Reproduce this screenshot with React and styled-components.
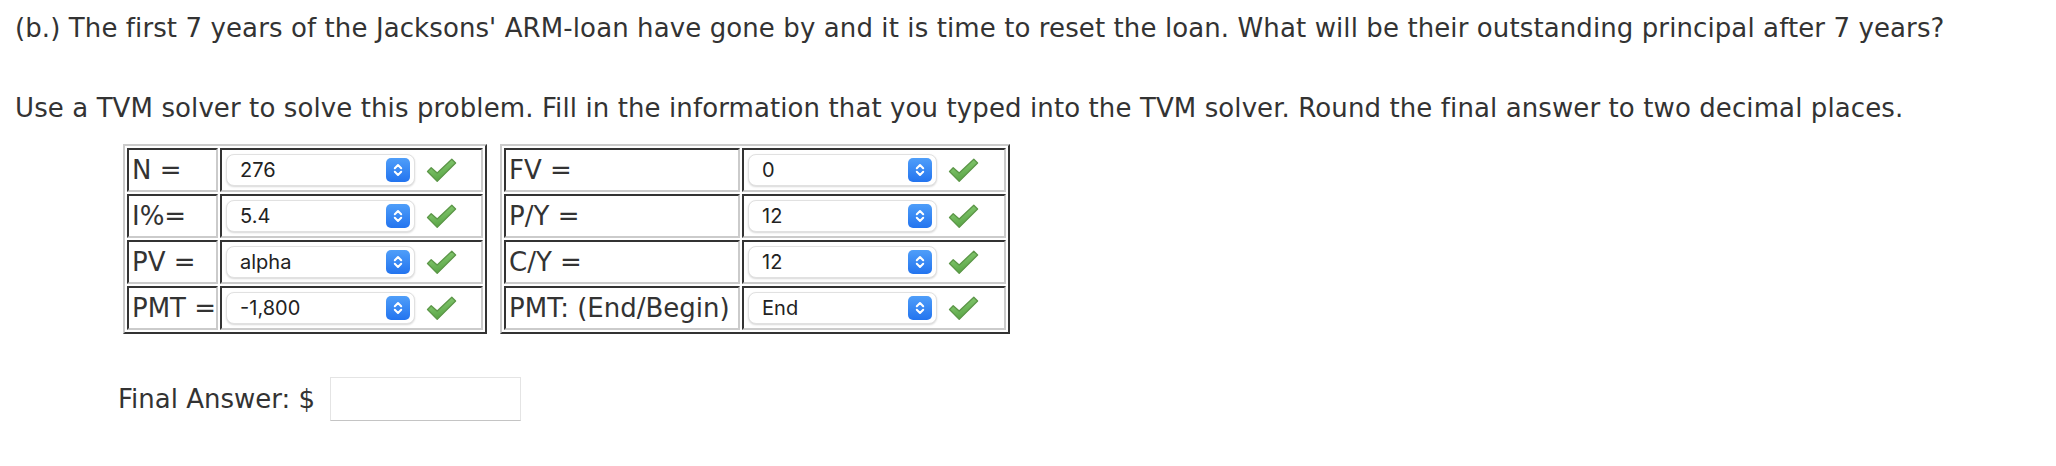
import styled, { createGlobalStyle } from "styled-components";

const GlobalStyle = createGlobalStyle`
  body {
    margin: 0;
    background: #fff;
    color: #333;
    font-family: "DejaVu Sans", Verdana, sans-serif;
  }
`;

const Page = styled.div`
  padding: 13px 0 0 15px;
  font-size: 26px;
  line-height: 30px;
`;

const Text = styled.p`
  margin: 0 0 ${(p) => p.$after || 0}px;
  white-space: nowrap;
  letter-spacing: 0.1px;
`;

const Tables = styled.div`
  display: flex;
  align-items: flex-start;
  gap: 13px;
  margin: 21px 0 0 108px;
`;

const Solver = styled.table`
  border-collapse: separate;
  border-spacing: 2px;
  border: 2px solid;
  border-color: #cbcbcb #333 #333 #cbcbcb;
`;

const Cell = styled.td`
  box-sizing: border-box;
  width: ${(p) => p.$w}px;
  min-width: ${(p) => p.$w}px;
  height: 44px;
  padding: 0 0 0 ${(p) => p.$pad}px;
  border: 2px solid;
  border-color: #333 #cbcbcb #cbcbcb #333;
  vertical-align: middle;
  white-space: nowrap;
`;

const Field = styled.div`
  display: flex;
  align-items: center;
  gap: 11px;
`;

const SelectBox = styled.div`
  box-sizing: border-box;
  width: 189px;
  height: 32px;
  display: flex;
  align-items: center;
  justify-content: space-between;
  padding: 0 4px 0 13px;
  border: 1px solid #e1e1e1;
  border-radius: 8px;
  background: #fff;
  box-shadow: 0 1px 2px rgba(0, 0, 0, 0.16);
  font-family: Inter, "Liberation Sans", sans-serif;
  font-size: 20px;
  color: #222;
`;

const Stepper = styled.span`
  width: 24px;
  height: 24px;
  border-radius: 5px;
  background: linear-gradient(#4f9ef9, #2374ef);
  display: flex;
  align-items: center;
  justify-content: center;
`;

const AnswerRow = styled.div`
  display: flex;
  align-items: center;
  margin: 43px 0 0 103px;
`;

const AnswerInput = styled.input`
  width: 191px;
  height: 44px;
  box-sizing: border-box;
  margin-left: 15px;
  border: 1px solid #e4e4e4;
  border-bottom-color: #c4c4c4;
  background: #fff;
  outline: none;
`;

const Chevrons = () => (
  <svg width="12" height="16" viewBox="0 0 12 16">
    <path d="M2.8 6.2 L6 3 L9.2 6.2 M2.8 9.8 L6 13 L9.2 9.8" fill="none" stroke="#fff" strokeWidth="2" strokeLinecap="round" strokeLinejoin="round" />
  </svg>
);

const Check = () => (
  <svg width="31" height="25" viewBox="0 0 31 25">
    <defs>
      <linearGradient id="ck" x1="0" y1="0" x2="0.4" y2="1">
        <stop offset="0" stopColor="#93d47d" />
        <stop offset="1" stopColor="#57a344" />
      </linearGradient>
    </defs>
    <path d="M1.5 13.5 L5.2 9.8 L11.2 15 L25.8 1.2 L29.6 5 L11.2 23.4 Z" fill="url(#ck)" stroke="#5b9647" strokeWidth="1.3" strokeLinejoin="round" />
  </svg>
);

const Row = ({ label, value, widths }) => (
  <tr>
    <Cell $w={widths[0]} $pad={3}>{label}</Cell>
    <Cell $w={widths[1]} $pad={4}>
      <Field>
        <SelectBox>
          <span>{value}</span>
          <Stepper>
            <Chevrons />
          </Stepper>
        </SelectBox>
        <Check />
      </Field>
    </Cell>
  </tr>
);

const left = [
  ["N =", "276"],
  ["I%=", "5.4"],
  ["PV =", "alpha"],
  ["PMT =", "-1,800"],
];

const right = [
  ["FV =", "0"],
  ["P/Y =", "12"],
  ["C/Y =", "12"],
  ["PMT: (End/Begin)", "End"],
];

export default function App() {
  return (
    <>
      <GlobalStyle />
      <Page>
        <Text $after={50}>
          (b.) The first 7 years of the Jacksons' ARM-loan have gone by and it is time to reset the loan. What will be their outstanding principal after 7 years?
        </Text>
        <Text>
          Use a TVM solver to solve this problem. Fill in the information that you typed into the TVM solver. Round the final answer to two decimal places.
        </Text>
        <Tables>
          <Solver>
            <tbody>
              {left.map(([l, v]) => (
                <Row key={l} label={l} value={v} widths={[91, 263]} />
              ))}
            </tbody>
          </Solver>
          <Solver>
            <tbody>
              {right.map(([l, v]) => (
                <Row key={l} label={l} value={v} widths={[236, 264]} />
              ))}
            </tbody>
          </Solver>
        </Tables>
        <AnswerRow>
          Final Answer: $
          <AnswerInput type="text" />
        </AnswerRow>
      </Page>
    </>
  );
}
